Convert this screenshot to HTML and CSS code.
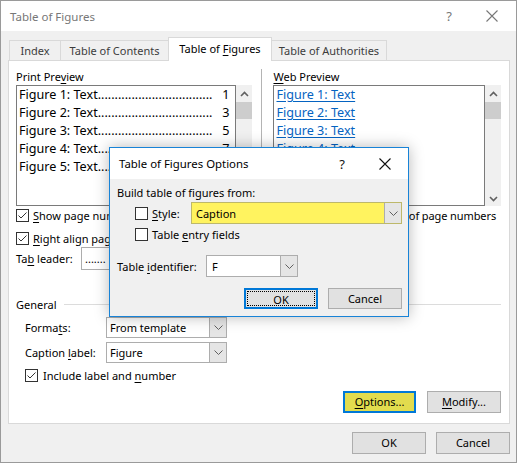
FILE: index.html
```html
<!DOCTYPE html>
<html lang="en">
  <head>
    <meta charset="UTF-8" />
    <title>Table of Figures</title>
    <link rel="stylesheet" href="styles.css">
  </head>
  <body>
    <div class="window">
      <div class="titlebar">
        <span class="title">Table of Figures</span>
        <span class="help">?</span>
        <svg class="close" width="12" height="12" viewBox="0 0 12 12"><path d="M0.5 0.5 L11.5 11.5 M11.5 0.5 L0.5 11.5" stroke="#777" stroke-width="1.1" fill="none"/></svg>
      </div>

      <div class="tabs">
        <div class="tab t-index">Index</div>
        <div class="tab t-contents">Table of Contents</div>
        <div class="tab t-figures active">Table of <u>F</u>igures</div>
        <div class="tab t-auth">Table of Authorities</div>
      </div>

      <div class="panel">
        <div class="previews">
          <div class="col col-left">
            <div class="label">Print Pre<u>v</u>iew</div>
            <div class="listwrap">
              <div class="listbox">
                <div class="row"><span>Figure 1: Text..................................</span><span class="num">1</span></div>
                <div class="row"><span>Figure 2: Text..................................</span><span class="num">3</span></div>
                <div class="row"><span>Figure 3: Text..................................</span><span class="num">5</span></div>
                <div class="row"><span>Figure 4: Text..................................</span><span class="num">7</span></div>
                <div class="row"><span>Figure 5: Text................................</span><span class="num">10</span></div>
              </div>
              <div class="scrollbar">
                <svg class="arrow" width="9" height="6" viewBox="0 0 9 6"><path d="M1 5 L4.5 1.5 L8 5" stroke="#606060" stroke-width="1.6" fill="none"/></svg>
                <div class="thumb"></div>
                <div class="spacer"></div>
                <svg class="arrow" width="9" height="6" viewBox="0 0 9 6"><path d="M1 1 L4.5 4.5 L8 1" stroke="#606060" stroke-width="1.6" fill="none"/></svg>
              </div>
            </div>
            <div class="check first">
              <span class="box"><svg width="11" height="11" viewBox="0 0 11 11"><path d="M1.5 5.5 L4 8 L9.5 2.5" stroke="#333" stroke-width="1" fill="none"/></svg></span>
              <span><u>S</u>how page numbers</span>
            </div>
            <div class="check">
              <span class="box"><svg width="11" height="11" viewBox="0 0 11 11"><path d="M1.5 5.5 L4 8 L9.5 2.5" stroke="#333" stroke-width="1" fill="none"/></svg></span>
              <span><u>R</u>ight align page numbers</span>
            </div>
            <div class="leader-row">
              <span class="leader-label">Ta<u>b</u> leader:</span>
              <div class="combo leader"><span class="value">.......</span></div>
            </div>
          </div>

          <div class="divider"></div>

          <div class="col col-right">
            <div class="label"><u>W</u>eb Preview</div>
            <div class="listwrap">
              <div class="listbox web">
                <div class="row"><a>Figure 1: Text</a></div>
                <div class="row"><a>Figure 2: Text</a></div>
                <div class="row"><a>Figure 3: Text</a></div>
                <div class="row"><a>Figure 4: Text</a></div>
                <div class="row"><a>Figure 5: Text</a></div>
              </div>
              <div class="scrollbar">
                <svg class="arrow" width="9" height="6" viewBox="0 0 9 6"><path d="M1 5 L4.5 1.5 L8 5" stroke="#606060" stroke-width="1.6" fill="none"/></svg>
                <div class="thumb"></div>
                <div class="spacer"></div>
                <svg class="arrow" width="9" height="6" viewBox="0 0 9 6"><path d="M1 1 L4.5 4.5 L8 1" stroke="#606060" stroke-width="1.6" fill="none"/></svg>
              </div>
            </div>
            <div class="check first">
              <span class="box"><svg width="11" height="11" viewBox="0 0 11 11"><path d="M1.5 5.5 L4 8 L9.5 2.5" stroke="#333" stroke-width="1" fill="none"/></svg></span>
              <span class="narrow">Us<u>e</u> hyperlinks instead of page numbers</span>
            </div>
          </div>
        </div>

        <div class="section">
          <span>General</span>
          <div class="rule"></div>
        </div>

        <div class="field first">
          <span class="field-label">Forma<u>t</u>s:</span>
          <div class="combo general"><span class="value">From template</span>
            <span class="drop"><svg width="9" height="5" viewBox="0 0 9 5"><path d="M0.5 0.5 L4.5 4.5 L8.5 0.5" stroke="#606060" fill="none"/></svg></span>
          </div>
        </div>
        <div class="field">
          <span class="field-label">Caption <u>l</u>abel:</span>
          <div class="combo general"><span class="value">Figure</span>
            <span class="drop"><svg width="9" height="5" viewBox="0 0 9 5"><path d="M0.5 0.5 L4.5 4.5 L8.5 0.5" stroke="#606060" fill="none"/></svg></span>
          </div>
        </div>
        <div class="check include">
          <span class="box"><svg width="11" height="11" viewBox="0 0 11 11"><path d="M1.5 5.5 L4 8 L9.5 2.5" stroke="#333" stroke-width="1" fill="none"/></svg></span>
          <span>Include label and <u>n</u>umber</span>
        </div>

        <div class="panel-buttons">
          <div class="btn options"><u>O</u>ptions...</div>
          <div class="btn"><u>M</u>odify...</div>
        </div>
      </div>

      <div class="footer">
        <div class="btn">OK</div>
        <div class="btn">Cancel</div>
      </div>

      <!-- options dialog on top -->
      <div class="popup">
        <div class="popup-title">
          <span class="title">Table of Figures Options</span>
          <span class="help">?</span>
          <svg class="close" width="12" height="12" viewBox="0 0 12 12"><path d="M0.5 0.5 L11.5 11.5 M11.5 0.5 L0.5 11.5" stroke="#111" stroke-width="1.1" fill="none"/></svg>
        </div>
        <div class="popup-body">
          <div class="popup-label">Build table of figures from:</div>
          <div class="style-row">
            <span class="box"></span>
            <span class="style-label"><u>S</u>tyle:</span>
            <div class="combo caption"><span class="value">Caption</span>
              <span class="drop"><svg width="9" height="5" viewBox="0 0 9 5"><path d="M0.5 0.5 L4.5 4.5 L8.5 0.5" stroke="#606060" fill="none"/></svg></span>
            </div>
          </div>
          <div class="check entry">
            <span class="box"></span>
            <span>Table <u>e</u>ntry fields</span>
          </div>
          <div class="ident-row">
            <span>Table <u>i</u>dentifier:</span>
            <div class="combo ident"><span class="value">F</span>
              <span class="drop"><svg width="9" height="5" viewBox="0 0 9 5"><path d="M0.5 0.5 L4.5 4.5 L8.5 0.5" stroke="#606060" fill="none"/></svg></span>
            </div>
          </div>
          <div class="popup-buttons">
            <div class="btn default"><span class="focus">OK</span></div>
            <div class="btn">Cancel</div>
          </div>
        </div>
      </div>
    </div>
  </body>
</html>
```

FILE: styles.css
```css
* {
  margin: 0;
  padding: 0;
  box-sizing: border-box;
}

body {
  font-family: "Noto Sans", "Open Sans", sans-serif;
  font-size: 11px;
  color: #000;
  background: #fff;
}

u {
  text-decoration: underline;
  text-underline-offset: 2px;
}

.window {
  position: relative;
  width: 517px;
  height: 463px;
  border: 1px solid #9a9a9a;
  background: #f0f0f0;
  overflow: hidden;
}

/* title bar */
.titlebar {
  height: 30px;
  background: #fff;
  display: flex;
  align-items: center;
  padding-left: 9px;
}
.titlebar .title {
  color: #777;
  flex: 1;
  font-size: 11.5px;
}
.help {
  color: #777;
  font-size: 13px;
  margin-right: 34px;
}
.close {
  margin-right: 18px;
}

/* tabs */
.tabs {
  display: flex;
  align-items: flex-end;
  height: 29px;
  padding-left: 8px;
}
.tab {
  height: 20px;
  line-height: 19px;
  text-align: center;
  border: 1px solid #d9d9d9;
  border-bottom: none;
  color: #3c3c3c;
  margin-left: -1px;
}
.t-index { width: 52px; margin-left: 0; }
.t-contents { width: 109px; }
.t-figures { width: 104px; }
.t-auth { width: 116px; }
.tab.active {
  height: 24px;
  line-height: 22px;
  background: #fff;
  color: #000;
  margin-bottom: -1px;
  position: relative;
  z-index: 1;
}

/* main tab page */
.panel {
  margin-left: 7px;
  width: 502px;
  height: 364px;
  background: #fff;
  border: 1px solid #d9d9d9;
  padding: 8px 8px 0 7px;
}
.previews {
  display: flex;
}
.col-left {
  width: 237px;
}
.col-right {
  width: 228px;
}
.divider {
  width: 1px;
  margin: 0 11px 0 9px;
  background: #b4b4b4;
}
.label {
  height: 16px;
  line-height: 16px;
}
.listwrap {
  display: flex;
  height: 121px;
}
.listbox {
  flex: 1;
  min-width: 0;
  border: 1px solid #7a7a7a;
  padding: 0 6px 0 2px;
  font-size: 12.6px;
  overflow: hidden;
}
.listbox .row {
  display: flex;
  justify-content: space-between;
  height: 18px;
  line-height: 18px;
  white-space: nowrap;
}
.listbox.web a {
  color: #0563c1;
  text-decoration: underline;
  text-underline-offset: 2px;
}
.scrollbar {
  width: 16px;
  flex: none;
  background: #f0f0f0;
  display: flex;
  flex-direction: column;
  align-items: center;
  padding: 6px 0 4px;
}
.scrollbar .arrow {
  flex: none;
}
.thumb {
  width: 16px;
  height: 17px;
  margin-top: 5px;
  background: #cdcdcd;
}
.spacer {
  flex: 1;
}

/* checkboxes */
.check {
  display: flex;
  align-items: center;
  height: 13px;
  margin-top: 10px;
  white-space: nowrap;
}
.check.first {
  margin-top: 3px;
}
.box {
  width: 13px;
  height: 13px;
  border: 1px solid #333;
  background: #fff;
  margin-right: 4px;
  flex: none;
  display: flex;
  align-items: center;
  justify-content: center;
}
.col-right .check .box {
  margin-right: 5px;
}
.narrow {
  letter-spacing: -0.1px;
}

/* combos */
.combo {
  display: flex;
  align-items: center;
  background: #fff;
  border: 1px solid #adadad;
}
.combo .value {
  flex: 1;
  padding-left: 3px;
  white-space: nowrap;
  overflow: hidden;
}
.combo .drop {
  width: 17px;
  align-self: stretch;
  background: #e5e5e5;
  border-left: 1px solid #adadad;
  display: flex;
  align-items: center;
  justify-content: center;
}

.leader-row {
  display: flex;
  align-items: center;
  height: 23px;
  margin-top: 2px;
}
.leader-label {
  width: 65px;
}
.combo.leader {
  width: 120px;
  height: 23px;
}

/* general section */
.section {
  display: flex;
  align-items: center;
  height: 16px;
  margin-top: 26px;
}
.section .rule {
  flex: 1;
  height: 1px;
  background: #dcdcdc;
  margin-left: 7px;
}
.field {
  display: flex;
  align-items: center;
  margin-left: 9px;
  margin-top: 4px;
}
.field.first {
  margin-top: 5px;
}
.field-label {
  width: 81px;
}
.combo.general {
  width: 121px;
  height: 21px;
}
.check.include {
  margin-left: 9px;
  margin-top: 6px;
}
.check.include .box {
  margin-right: 5px;
}

/* buttons */
.btn {
  width: 74px;
  height: 22px;
  line-height: 20px;
  text-align: center;
  background: #e1e1e1;
  border: 1px solid #adadad;
}
.panel-buttons {
  display: flex;
  justify-content: flex-end;
  gap: 11px;
  margin-top: 9px;
}
.btn.options {
  width: 73px;
  background: #e2dc4e;
  border: 2px solid #0078d7;
  line-height: 18px;
}
.footer {
  display: flex;
  justify-content: flex-end;
  gap: 10px;
  padding-right: 6px;
  margin-top: 8px;
}
.footer .btn {
  height: 22px;
}

/* options dialog */
.popup {
  position: absolute;
  left: 108px;
  top: 146px;
  width: 300px;
  height: 170px;
  border: 1px solid #1883d7;
  background: #f0f0f0;
  box-shadow: 0 0 14px rgba(0, 0, 0, 0.28);
  z-index: 5;
}
.popup-title {
  height: 31px;
  background: #fff;
  display: flex;
  align-items: center;
  padding-left: 9px;
}
.popup-title .title {
  flex: 1;
  font-size: 11.4px;
}
.popup-title .help {
  color: #111;
  margin-right: 34px;
}
.popup-title .close {
  margin-right: 17px;
}
.popup-body {
  padding: 6px 6px 0 7px;
}
.popup-label {
  height: 16px;
  line-height: 16px;
}
.style-row {
  display: flex;
  align-items: center;
  height: 22px;
  margin-top: 1px;
  padding-left: 18px;
}
.style-label {
  width: 39px;
}
.combo.caption {
  flex: 1;
  height: 22px;
  background: #fff35f;
  border-color: #bdb86a;
}
.combo.caption .value {
  padding-left: 4px;
}
.check.entry {
  margin-top: 4px;
  padding-left: 18px;
}
.ident-row {
  display: flex;
  align-items: center;
  height: 22px;
  margin-top: 14px;
}
.ident-row > span {
  width: 89px;
}
.combo.ident {
  width: 92px;
  height: 22px;
}
.combo.ident .value {
  padding-left: 5px;
}
.popup-buttons {
  display: flex;
  justify-content: flex-end;
  gap: 10px;
  margin-top: 11px;
}
.popup-buttons .btn {
  height: 21px;
}
.btn.default {
  border: 2px solid #0078d7;
  padding: 1px;
  line-height: 15px;
}
.focus {
  display: block;
  height: 15px;
  border: 1px dotted #000;
}
```
